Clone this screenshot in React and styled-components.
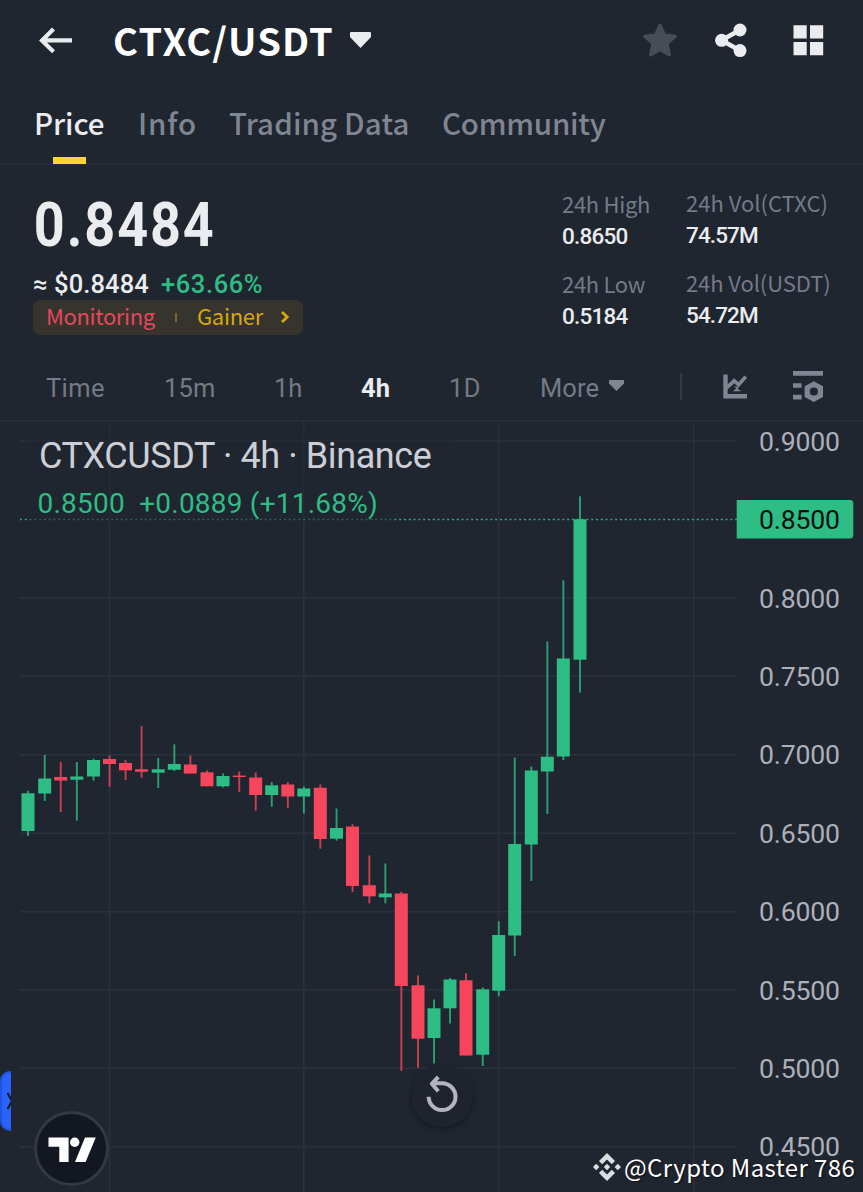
import React from "react";
import styled, { createGlobalStyle } from "styled-components";

const c = {
  bg: "#202630",
  line: "#2b313a",
  text: "#eaecef",
  grey: "#7f8591",
  green: "#2ebd85",
  red: "#f6465d",
  yellow: "#fcd535",
};
const sans = `"Noto Sans CJK SC", "Noto Sans", sans-serif`;
const num = `Roboto, "Liberation Sans", sans-serif`;

const GlobalStyle = createGlobalStyle`
  * { box-sizing: border-box; }
  body { margin: 0; background: ${c.bg}; overflow: hidden; }
`;

const Screen = styled.main`
  width: 863px;
  height: 1192px;
  overflow: hidden;
  display: flex;
  flex-direction: column;
  background: ${c.bg};
  color: ${c.text};
  font-family: ${sans};
  white-space: nowrap;
`;

const Header = styled.header`
  display: flex;
  align-items: center;
  height: 82px;
  padding: 0 38px 2px 36px;
`;
const Pair = styled.h1`
  margin: 0 0 0 37px;
  width: 237px;
  font-size: 38px;
  font-weight: 700;
  line-height: 78px;
  letter-spacing: ${(p) => p.$ls}px;
  color: #fff;
`;
const Actions = styled.div`
  display: flex;
  align-items: center;
  gap: 33px;
  margin-left: auto;
`;

const Tabs = styled.nav`
  display: flex;
  height: 83px;
  padding-left: 34px;
  border-bottom: 2px solid #262c36;
`;
const Tab = styled.div`
  position: relative;
  width: ${(p) => p.$w}px;
  font-size: 29.5px;
  line-height: 80px;
  font-weight: 500;
  letter-spacing: ${(p) => p.$ls}px;
  color: ${(p) => (p.$active ? c.text : c.grey)};
`;
const Underline = styled.span`
  position: absolute;
  left: 19px;
  bottom: -1px;
  width: 33px;
  height: 7px;
  background: ${c.yellow};
`;

const Summary = styled.section`
  display: flex;
  height: 188px;
  padding-left: 33px;
`;
const PriceBlock = styled.div`
  width: 529px;
  padding-top: 28px;
`;
const Price = styled.div`
  font: 700 62px/64px ${num};
  letter-spacing: ${(p) => p.$ls}px;
  margin-bottom: 9px;
  padding-left: 1px;
  transform: scaleX(0.87);
  transform-origin: left;
`;
const Change = styled.div`
  display: flex;
  height: 34px;
  font: 500 25.5px/36px ${num};
`;
const Fiat = styled.span`
  width: 128px;
  letter-spacing: ${(p) => p.$ls}px;
`;
const Percent = styled.span`
  color: ${c.green};
  letter-spacing: ${(p) => p.$ls}px;
`;
const Tags = styled.div`
  display: flex;
  align-items: center;
  width: 270px;
  height: 35px;
  padding: 0 12px 0 13px;
  border-radius: 8px;
  background: #36342d;
  font-size: 22px;
  line-height: 30px;
`;
const Tag = styled.span`
  width: ${(p) => p.$w}px;
  padding-bottom: 5px;
  color: ${(p) => p.$color};
  letter-spacing: ${(p) => p.$ls}px;
`;
const TagRule = styled.span`
  width: 2px;
  height: 9px;
  margin-right: 20px;
  background: #7a6524;
`;

const StatColumn = styled.div`
  display: flex;
  flex-direction: column;
  gap: 16px;
  width: 124px;
  padding-top: ${(p) => p.$top}px;
`;
const StatLabel = styled.div`
  height: 32px;
  font-size: 22px;
  line-height: 30px;
  letter-spacing: ${(p) => p.$ls || 0}px;
  color: #747a86;
`;
const StatValue = styled.div`
  height: 32px;
  font: 500 22.5px/33px ${num};
  letter-spacing: ${(p) => p.$ls || 0}px;
`;

const Intervals = styled.nav`
  display: flex;
  align-items: center;
  height: 67px;
  padding-left: 46px;
`;
const Interval = styled.span`
  width: ${(p) => p.$w}px;
  font-family: ${num};
  font-size: 25.5px;
  line-height: 64px;
  padding-top: 2px;
  font-weight: ${(p) => (p.$active ? 700 : 400)};
  letter-spacing: ${(p) => p.$ls}px;
  color: ${(p) => (p.$active ? c.text : "#747a86")};
`;
const MoreCaret = styled.span`
  display: flex;
  padding-bottom: 3px;
`;
const Rule = styled.span`
  width: 2px;
  height: 27px;
  margin: 0 40px 0 56px;
  background: #343a45;
`;
const ChartTools = styled.div`
  display: flex;
  align-items: center;
  gap: 44px;
`;

const ChartArea = styled.section`
  position: relative;
  height: 772px;
`;
const Plot = styled.svg`
  display: block;
`;
const Legend = styled.div`
  position: absolute;
  left: 28px;
  top: 6px;
`;
const LegendRow = styled.div`
  width: ${(p) => p.$w}px;
  padding-left: ${(p) => p.$pad}px;
  font: 400 ${(p) => p.$size}px/${(p) => p.$h}px ${num};
  letter-spacing: ${(p) => p.$ls}px;
  white-space: pre;
  color: ${(p) => p.$color};
  background: rgba(32, 38, 48, 0.5);
`;
const ResetButton = styled.button`
  position: absolute;
  left: 411px;
  top: 645px;
  width: 62px;
  height: 62px;
  padding: 0;
  border: 0;
  border-radius: 50%;
  background: #1f232d;
  box-shadow: 0 2px 5px rgba(10, 12, 20, 0.55);
`;
const SideHandle = styled.div`
  position: absolute;
  left: 0;
  top: 651px;
  width: 11px;
  height: 60px;
  overflow: hidden;
  border-radius: 10px 0 0 10px;
  border: 2px solid #1f54e0;
  border-right: 0;
  background: #2962ff;
`;
const Badge = styled.div`
  position: absolute;
  left: 34px;
  top: 691px;
  width: 75px;
  height: 75px;
  border-radius: 50%;
  border: 3px solid #333842;
  background: #131722;
`;
const Watermark = styled.div`
  position: absolute;
  left: 593px;
  top: 731px;
  display: flex;
  align-items: center;
  gap: 3px;
  font-size: 24px;
  font-weight: 400;
  line-height: 32px;
  letter-spacing: ${(p) => p.$ls}px;
  color: #fff;
  text-shadow: 1px 1px 2px rgba(0, 0, 0, 0.7);
`;

const BackIcon = () => (
  <svg width="40" height="30" viewBox="36 25 40 30" fill="none" stroke={c.text} strokeWidth="4.2">
    <path d="M53.5 29 42 40.4 53.5 51.8M41 40.4H72" />
  </svg>
);
const Caret = ({ w, h, color }) => (
  <svg width={w} height={h} viewBox="0 0 21 16" preserveAspectRatio="none" fill={color}>
    <path d="M0 1Q0 0 1 0H20Q21 0 21 1V5L10.5 16 0 5Z" />
  </svg>
);
const StarIcon = () => (
  <svg width="36" height="36" viewBox="642 22 36 36" fill="#474d57" stroke="#474d57" strokeWidth="3" strokeLinejoin="round">
    <path d="M660 25l4.6 9.9 10.7 1.3-8 7.4 2.1 11.4-9.4-5.2-9.4 5.2 2.1-11.4-8-7.4 10.7-1.3z" />
  </svg>
);
const ShareIcon = () => (
  <svg width="40" height="36" viewBox="711 22 40 36" fill={c.text}>
    <path d="M740 30 721.5 40.3 740 50.6" fill="none" stroke={c.text} strokeWidth="4.6" />
    <circle cx="740" cy="30" r="6.5" />
    <circle cx="721.6" cy="40.3" r="6.5" />
    <circle cx="740" cy="50.6" r="6.5" />
  </svg>
);
const GridIcon = () => (
  <svg width="41" height="34" viewBox="784 23 41 34" fill={c.text}>
    <path d="M793.5 25.3h13.2v13.2h-13.2zM810 25.3h13.2v13.2H810zM793.5 42h13.2v13.2h-13.2zM810 42h13.2v13.2H810z" />
  </svg>
);
const IndicatorIcon = () => (
  <svg width="26" height="28" viewBox="722 372 26 28" fill={c.grey}>
    <path d="M723.3 373.5h4.4v19.6H747v4.4h-23.7z" />
    <path d="M726.5 386.8 734.2 379.8 738.6 383.8 745.8 375.6" fill="none" stroke={c.grey} strokeWidth="3.6" />
    <path d="M732.8 390.2 736.2 387.4 734.4 385.4h5l-1.8 2 3.6 2.8z" />
  </svg>
);
const SettingsIcon = () => (
  <svg width="32" height="34" viewBox="792 370 32 34" fill={c.grey}>
    <path d="M793 371h30v4.8h-30zM793 383.2h8.6v4.6H793zM793 394.8h8.6v4.6H793z" />
    <path fillRule="evenodd" d="M813.8 381.2 823 386.2V397l-9.2 5-9.2-5v-10.8zM813.8 387.4a4.1 4.1 0 1 0 0 8.2 4.1 4.1 0 0 0 0-8.2z" />
  </svg>
);

// [x, body top, body bottom, wick top, wick bottom, rising]
const candles = [
  [28, 793.3, 831, 790.7, 836, 1], [44.7, 778.5, 793.5, 755, 801, 1], [60.7, 777, 780.5, 762, 812, 0],
  [76.8, 776.5, 779.7, 762, 820.7, 1], [93.5, 760, 776.5, 758.7, 780.7, 1], [109.5, 759, 764, 755.5, 786.7, 0],
  [125.5, 763, 770.3, 760, 780, 0], [141.5, 769.3, 771.7, 726, 777.7, 0], [158.2, 769.3, 772.7, 758, 788, 1],
  [174.3, 764, 769.7, 744.3, 771, 1], [190.3, 764.5, 773.5, 755.5, 773.5, 0], [207, 772.3, 786.3, 770.5, 786.3, 0],
  [223, 776, 786.3, 773.5, 787.5, 1], [239.2, 775.6, 777, 771.5, 792, 0], [255.7, 777.5, 795, 772.5, 810.7, 0],
  [271.7, 785.3, 795, 782, 806.7, 1], [287.8, 784.5, 796.5, 782, 807.7, 0], [303.8, 788.5, 796.5, 786.5, 813.7, 1],
  [320.3, 787.7, 839, 784.5, 848.7, 0], [336.5, 828, 838.7, 808.5, 840.7, 1], [352.5, 826.5, 886, 824.3, 892, 0],
  [369.3, 885.2, 896.3, 855.5, 903.3, 0], [385.3, 893.5, 897.3, 863.5, 903.3, 1], [401.3, 893.5, 986, 891.7, 1071, 0],
  [418, 985.3, 1038.7, 975.5, 1067.7, 0], [434, 1008.3, 1038, 999.5, 1063.5, 1], [450, 979.5, 1008.3, 978, 1023.5, 1],
  [466, 980.3, 1055.5, 973.3, 1055.5, 0], [482.7, 989.3, 1054.7, 987.5, 1066, 1], [498.7, 935, 990.7, 921.3, 996.3, 1],
  [514.7, 844, 935.5, 757.7, 956, 1], [531.3, 770.5, 844.5, 766.5, 881, 1], [547.3, 756.7, 771.5, 641.5, 814, 1],
  [563.3, 658.5, 756.5, 580.3, 760, 1], [580, 519.3, 659.7, 496.3, 692.5, 1],
];
const levels = [
  ["0.9000", 441], ["0.8000", 598], ["0.7500", 676.3], ["0.7000", 754.7], ["0.6500", 833.3],
  ["0.6000", 911.7], ["0.5500", 990], ["0.5000", 1068.3], ["0.4500", 1146.7],
];
const columns = [109.5, 303.8, 498.5, 693.6];

function CandleChart() {
  return (
    <Plot width="863" height="772" viewBox="0 420 863 772">
      <rect x="0" y="419.5" width="863" height="2" fill={c.line} />
      {levels.map(([t, y]) => (
        <rect key={t} x="20" y={y - 0.8} width="716" height="1.7" fill={c.line} />
      ))}
      {columns.map((x) => (
        <rect key={x} x={x - 0.8} y="421" width="1.7" height="771" fill={c.line} />
      ))}
      <path d="M20 519.5H737" stroke={c.green} strokeWidth="1.7" strokeDasharray="1.9 2.9" opacity="0.9" />
      {candles.map(([x, top, bottom, high, low, up]) => (
        <g key={x} fill={up ? c.green : c.red}>
          <rect x={x - 0.9} y={high} width="1.9" height={low - high} opacity="0.8" />
          <rect x={x - 6.5} y={top} width="13" height={bottom - top} />
        </g>
      ))}
      <path d="M736.7 500H850q3.3 0 3.3 3.3V535.3q0 3.3-3.3 3.3H736.7z" fill={c.green} />
      <g fontFamily={num} fontSize="26.6">
        {levels.map(([t, y]) => (
          <text key={t} x="759" y={y + 9.6} textLength="81" fill="#adb0b9">{t}</text>
        ))}
        <text x="759" y="528.7" textLength="81" fill="#0b0e11">0.8500</text>
      </g>
    </Plot>
  );
}

export default function App() {
  return (
    <Screen>
      <GlobalStyle />
      <Header>
        <BackIcon />
        <Pair $ls={1.1}>CTXC/USDT</Pair>
        <Caret w={21} h={16} color={c.text} />
        <Actions>
          <StarIcon />
          <ShareIcon />
          <GridIcon />
        </Actions>
      </Header>
      <Tabs>
        <Tab $w={104} $ls={-0.1} $active>Price<Underline /></Tab>
        <Tab $w={91} $ls={0.9}>Info</Tab>
        <Tab $w={213} $ls={0.15}>Trading Data</Tab>
        <Tab $w={170} $ls={-0.25}>Community</Tab>
      </Tabs>
      <Summary>
        <PriceBlock>
          <Price $ls={2.2}>0.8484</Price>
          <Change>
            <Fiat $ls={0.1}>≈ $0.8484</Fiat>
            <Percent $ls={0.6}>+63.66%</Percent>
          </Change>
          <Tags>
            <Tag $w={129} $ls={-0.35} $color="#e5475d">Monitoring</Tag>
            <TagRule />
            <Tag $w={82} $ls={-0.3} $color="#d8a613">Gainer</Tag>
            <svg width="12" height="14" viewBox="0 0 12 14" fill="none" stroke="#d8a613" strokeWidth="2.8">
              <path d="M3 1 8.2 6 3 11" />
            </svg>
          </Tags>
        </PriceBlock>
        <StatColumn $top={23}>
          <div>
            <StatLabel $ls={-0.3}>24h High</StatLabel>
            <StatValue $ls={-0.8}>0.8650</StatValue>
          </div>
          <div>
            <StatLabel $ls={-0.3}>24h Low</StatLabel>
            <StatValue $ls={-0.8}>0.5184</StatValue>
          </div>
        </StatColumn>
        <StatColumn $top={22}>
          <div>
            <StatLabel $ls={0}>24h Vol(CTXC)</StatLabel>
            <StatValue $ls={-0.9}>74.57M</StatValue>
          </div>
          <div>
            <StatLabel $ls={-0.1}>24h Vol(USDT)</StatLabel>
            <StatValue $ls={-0.9}>54.72M</StatValue>
          </div>
        </StatColumn>
      </Summary>
      <Intervals>
        <Interval $w={118} $ls={0.4}>Time</Interval>
        <Interval $w={110} $ls={0.2}>15m</Interval>
        <Interval $w={87} $ls={0}>1h</Interval>
        <Interval $w={88} $ls={0} $active>4h</Interval>
        <Interval $w={91} $ls={0.3}>1D</Interval>
        <Interval $w={69} $ls={0.1}>More</Interval>
        <MoreCaret>
          <Caret w={15} h={11} color={c.grey} />
        </MoreCaret>
        <Rule />
        <ChartTools>
          <IndicatorIcon />
          <SettingsIcon />
        </ChartTools>
      </Intervals>
      <ChartArea>
        <CandleChart />
        <Legend>
          <LegendRow $w={424} $pad={11} $size={36} $h={60} $ls={-0.4} $color="#cdcfd6">CTXCUSDT · 4h · Binance</LegendRow>
          <LegendRow $w={366} $pad={9.5} $size={28} $h={36} $ls={0.22} $color={c.green}>{"0.8500  +0.0889 (+11.68%)"}</LegendRow>
        </Legend>
        <ResetButton aria-label="Reset chart">
          <svg width="62" height="62" viewBox="411 1065 62 62" fill="none" stroke="#b2b5be" strokeWidth="4" strokeLinejoin="round">
            <path d="M428.7 1096.7a13.4 13.4 0 1 0 13.4-13.4H432.5M438.3 1077 431.8 1083.8 438.3 1091.2" />
          </svg>
        </ResetButton>
        <SideHandle>
          <svg width="9" height="56" viewBox="2 1073 9 56" fill="none" stroke="#131722" strokeWidth="2">
            <path d="M7.5 1093 12 1101 7.5 1109" />
          </svg>
        </SideHandle>
        <Badge>
          <svg width="69" height="69" viewBox="37 1114 69 69" fill="#fff">
            <path d="M48.5 1137.4H68.6V1162H59.3V1146.8H48.5zM85 1137.4H95.8L85.6 1162H75z" />
            <circle cx="74.7" cy="1142.3" r="4.7" />
          </svg>
        </Badge>
        <Watermark $ls={0.4}>
          <svg width="28" height="28" viewBox="0 0 28 28" fill="#dcdde0">
            <path d="M14 0 22 8l-3.2 3.2L14 6.4 9.2 11.2 6 8zM14 28 6 20l3.2-3.2L14 21.6l4.8-4.8L22 20zM3.2 10.8 6.4 14 3.2 17.2 0 14zM24.8 10.8 28 14l-3.2 3.2L21.6 14zM14 10.8 17.2 14 14 17.2 10.8 14z" />
          </svg>
          <span>@Crypto Master 786</span>
        </Watermark>
      </ChartArea>
    </Screen>
  );
}
